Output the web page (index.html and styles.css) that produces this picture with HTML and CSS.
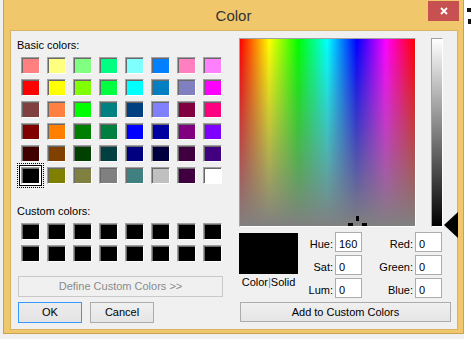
FILE: index.html
```html
<!DOCTYPE html>
<html>
<head>
<meta charset="utf-8">
<title>Color</title>
<link rel="stylesheet" href="styles.css">
</head>
<body>
<div class="screen">
  <div class="window">
    <div class="titlebar">
      <span class="title">Color</span>
      <div class="close"><svg width="8" height="8" viewBox="0 0 8 8"><path d="M1 1L7 7M7 1L1 7" stroke="#fff" stroke-width="1.8" fill="none"/></svg></div>
    </div>
    <div class="dialog">
      <div class="left">
        <div class="label basic-label">Basic colors:</div>
        <div class="grid basic">
          <i class="sw" style="background:#ff8080"></i><i class="sw" style="background:#ffff80"></i><i class="sw" style="background:#80ff80"></i><i class="sw" style="background:#00ff80"></i><i class="sw" style="background:#80ffff"></i><i class="sw" style="background:#0080ff"></i><i class="sw" style="background:#ff80c0"></i><i class="sw" style="background:#ff80ff"></i>
          <i class="sw" style="background:#ff0000"></i><i class="sw" style="background:#ffff00"></i><i class="sw" style="background:#80ff00"></i><i class="sw" style="background:#00ff40"></i><i class="sw" style="background:#00ffff"></i><i class="sw" style="background:#0080c0"></i><i class="sw" style="background:#8080c0"></i><i class="sw" style="background:#ff00ff"></i>
          <i class="sw" style="background:#804040"></i><i class="sw" style="background:#ff8040"></i><i class="sw" style="background:#00ff00"></i><i class="sw" style="background:#008080"></i><i class="sw" style="background:#004080"></i><i class="sw" style="background:#8080ff"></i><i class="sw" style="background:#800040"></i><i class="sw" style="background:#ff0080"></i>
          <i class="sw" style="background:#800000"></i><i class="sw" style="background:#ff8000"></i><i class="sw" style="background:#008000"></i><i class="sw" style="background:#008040"></i><i class="sw" style="background:#0000ff"></i><i class="sw" style="background:#0000a0"></i><i class="sw" style="background:#800080"></i><i class="sw" style="background:#8000ff"></i>
          <i class="sw" style="background:#400000"></i><i class="sw" style="background:#804000"></i><i class="sw" style="background:#004000"></i><i class="sw" style="background:#004040"></i><i class="sw" style="background:#000080"></i><i class="sw" style="background:#000040"></i><i class="sw" style="background:#400040"></i><i class="sw" style="background:#400080"></i>
          <i class="sw selected" style="background:#000000"></i><i class="sw" style="background:#808000"></i><i class="sw" style="background:#808040"></i><i class="sw" style="background:#808080"></i><i class="sw" style="background:#408080"></i><i class="sw" style="background:#c0c0c0"></i><i class="sw" style="background:#400040"></i><i class="sw" style="background:#ffffff"></i>
        </div>
        <div class="label custom-label">Custom colors:</div>
        <div class="grid custom">
          <i class="sw black"></i><i class="sw black"></i><i class="sw black"></i><i class="sw black"></i><i class="sw black"></i><i class="sw black"></i><i class="sw black"></i><i class="sw black"></i>
          <i class="sw black"></i><i class="sw black"></i><i class="sw black"></i><i class="sw black"></i><i class="sw black"></i><i class="sw black"></i><i class="sw black"></i><i class="sw black"></i>
        </div>
        <div class="define">Define Custom Colors &gt;&gt;</div>
        <div class="actions">
          <div class="btn ok">OK</div>
          <div class="btn">Cancel</div>
        </div>
      </div>
      <div class="right">
        <div class="pickers">
          <div class="spectrum">
            <i class="tick tick-v"></i>
            <i class="tick tick-l"></i>
            <i class="tick tick-r"></i>
          </div>
          <div class="lum"></div>
          <i class="arrow"></i>
        </div>
        <div class="mid">
          <div class="preview">
            <div class="solid"></div>
            <div class="cap">Color<span class="pipe">|</span>Solid</div>
          </div>
          <div class="fields">
            <span class="fl">Hue:</span><span class="in">160</span><span class="fl">Red:</span><span class="in">0</span>
            <span class="fl">Sat:</span><span class="in">0</span><span class="fl">Green:</span><span class="in">0</span>
            <span class="fl">Lum:</span><span class="in">0</span><span class="fl">Blue:</span><span class="in">0</span>
          </div>
        </div>
        <div class="btn add">Add to Custom Colors</div>
      </div>
    </div>
  </div>
  <div class="aside">
    <i class="mark mark-a"></i>
    <i class="mark mark-b"></i>
  </div>
</div>
</body>
</html>
```

FILE: styles.css
```css
html, body {
  margin: 0;
  padding: 0;
}
body {
  background: #f0f0f0;
  font-family: "Liberation Sans", Arial, sans-serif;
  font-size: 11px;
  color: #000;
}
.screen {
  display: flex;
  width: 471px;
  height: 339px;
  overflow: hidden;
}
.window {
  margin-left: 3px;
  width: 461px;
  height: 334px;
  box-sizing: border-box;
  border: 1px solid #c9a24f;
  border-top: 0;
  background: #f0c86b;
  display: flex;
  flex-direction: column;
}
.aside {
  flex: 1;
  background: #fff;
  display: flex;
  flex-direction: column;
  align-items: flex-end;
  padding-top: 8px;
}
.mark {
  display: block;
  background: #111;
}
.mark-a { width: 4px; height: 4px; }
.mark-b { width: 3px; height: 5px; margin-top: 7px; }
.titlebar {
  height: 30px;
  display: grid;
  grid-template-columns: 1fr auto 1fr;
  align-items: start;
}
.title {
  grid-column: 2;
  margin-top: 6px;
  font-size: 15px;
  line-height: 20px;
  color: #333;
}
.close {
  grid-column: 3;
  justify-self: end;
  width: 31px;
  height: 20px;
  margin: 1px 4px 0 0;
  background: #c75050;
  display: flex;
  align-items: center;
  justify-content: center;
}
.close svg { display: block; }
.dialog {
  flex: 1;
  margin: 0 5px 3px 6px;
  border: 1px solid #d6b461;
  background: #f0f0f0;
  display: flex;
}
.left {
  width: 206px;
  padding-left: 6px;
  display: flex;
  flex-direction: column;
}
.label {
  line-height: 13px;
  white-space: nowrap;
}
.basic-label { margin-top: 8px; }
.custom-label { margin-top: 21px; }
.grid {
  display: grid;
  grid-template-columns: repeat(8, 19px);
  grid-auto-rows: 17px;
  column-gap: 7px;
  row-gap: 5px;
  margin-left: 4px;
  margin-top: 5px;
}
.sw {
  display: block;
  box-sizing: border-box;
  border: 1px solid;
  border-color: #a0a0a0 #fff #fff #a0a0a0;
  box-shadow: inset 1px 1px 0 #696969;
}
.sw.black { background: #000; }
.sw.selected {
  box-shadow: inset 1px 1px 0 #696969, 0 0 0 1px #fff, 0 0 0 2px #000;
  outline: 1px dotted #000;
  outline-offset: 3px;
}
.define {
  margin: 14px 0 0 1px;
  width: 205px;
  height: 21px;
  box-sizing: border-box;
  border: 1px solid #c9c9c9;
  background: #f0f0f0;
  color: #8a8a8a;
  text-align: center;
  line-height: 19px;
}
.actions {
  display: flex;
  gap: 8px;
  margin: 5px 0 0 1px;
}
.btn {
  box-sizing: border-box;
  height: 21px;
  width: 64px;
  border: 1px solid #acacac;
  background: linear-gradient(#f0f0f0, #e5e5e5);
  text-align: center;
  line-height: 19px;
}
.btn.ok {
  border-color: #3399ff;
  background: linear-gradient(#ececec, #e4e4e4);
}
.right {
  margin-left: 16px;
  display: flex;
  flex-direction: column;
  flex: 1;
}
.pickers {
  display: flex;
  position: relative;
  margin-top: 7px;
  height: 189px;
}
.spectrum {
  position: relative;
  overflow: hidden;
  width: 177px;
  height: 189px;
  box-sizing: border-box;
  border: 1px solid;
  border-color: #a0a0a0 #fff #fff #a0a0a0;
  background:
    linear-gradient(to bottom, rgba(128,128,128,0), #808080),
    linear-gradient(to right, #f00, #ff0 16.67%, #0f0 33.33%, #0ff 50%, #00f 66.67%, #f0f 83.33%, #f00);
}
.tick {
  position: absolute;
  background: #000;
}
.tick-v { left: 116px; top: 177px; width: 3px; height: 5px; }
.tick-l { left: 108px; top: 184px; width: 5px; height: 3px; }
.tick-r { left: 122px; top: 184px; width: 5px; height: 3px; }
.lum {
  margin-left: 15px;
  width: 12px;
  height: 189px;
  box-sizing: border-box;
  border: 1px solid;
  border-color: #a0a0a0 #fff #fff #a0a0a0;
  background: linear-gradient(#fff, #000);
}
.arrow {
  position: absolute;
  left: 205px;
  top: 174px;
  width: 0;
  height: 0;
  border-right: 14px solid #000;
  border-top: 13px solid transparent;
  border-bottom: 13px solid transparent;
}
.mid {
  display: flex;
  margin-top: 5px;
}
.preview {
  width: 59px;
  margin-top: 1px;
}
.solid {
  height: 41px;
  background: #000;
}
.cap {
  margin-top: 2px;
  line-height: 13px;
  text-align: center;
  white-space: nowrap;
}
.pipe { color: #3c8fde; }
.fields {
  display: grid;
  grid-template-columns: 35px 27px 49px 27px;
  grid-auto-rows: 20px;
  column-gap: 2px;
  row-gap: 3px;
}
.fl {
  text-align: right;
  line-height: 16px;
  padding-top: 4px;
}
.in {
  box-sizing: border-box;
  border: 1px solid #acacac;
  background: #fff;
  padding: 3px 0 0 3px;
  line-height: 16px;
}
.btn.add {
  width: 211px;
  height: 20px;
  line-height: 18px;
  margin: 4px 0 0 1px;
}
```
